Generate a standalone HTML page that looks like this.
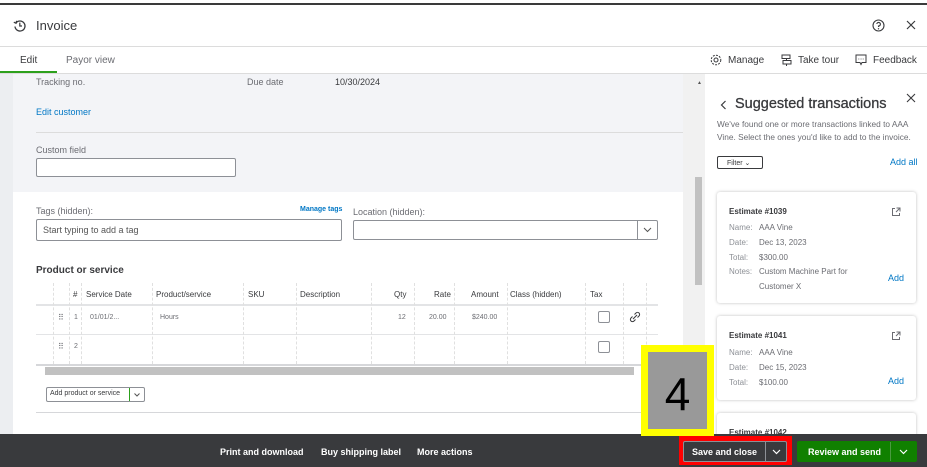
<!DOCTYPE html>
<html><head><meta charset="utf-8"><style>
*{box-sizing:border-box;margin:0;padding:0}
body{width:927px;height:467px;overflow:hidden;position:relative;background:#fff;font-family:"Liberation Sans",sans-serif;color:#393a3d}
.a{position:absolute}
.t{font-size:9px;color:#6b6c72;white-space:nowrap}
.vl{position:absolute;top:283px;height:81px;border-left:1px dashed #e0e0e0}
.lk{color:#0077c5}
svg{position:absolute;overflow:visible}
</style></head><body>
<div class="a" style="left:0;top:3px;width:927px;height:2px;background:#3a3a3a"></div>
<svg style="left:13px;top:19px" width="13" height="13" viewBox="0 0 13 13"><path d="M3 4 A5 5 0 1 1 2 7.5" fill="none" stroke="#393a3d" stroke-width="1.3"/><path d="M0.8 3.2 L3 4.3 L3.6 1.8" fill="none" stroke="#393a3d" stroke-width="1.2"/><path d="M6.8 3.6 V7 H9" fill="none" stroke="#393a3d" stroke-width="1.2"/></svg>
<div class="a" style="left:36px;top:18px;font-size:13px;color:#393a3d">Invoice</div>
<svg style="left:872px;top:19px" width="13" height="13" viewBox="0 0 13 13"><circle cx="6.5" cy="6.5" r="5.5" fill="none" stroke="#393a3d" stroke-width="1.1"/><path d="M4.8 5 A1.8 1.8 0 1 1 6.5 7 V8" fill="none" stroke="#393a3d" stroke-width="1.1"/><circle cx="6.5" cy="9.8" r=".7" fill="#393a3d"/></svg>
<svg style="left:906px;top:20px" width="10" height="10"><path d="M1 1 L9 9 M9 1 L1 9" stroke="#393a3d" stroke-width="1.2"/></svg>
<div class="a" style="left:0;top:46px;width:927px;height:1px;background:#dcdcdc"></div>
<div class="a" style="left:20px;top:55px;font-size:10px;color:#393a3d">Edit</div>
<div class="a" style="left:66px;top:55px;font-size:10px;color:#6b6c72">Payor view</div>
<div class="a" style="left:0;top:71px;width:57px;height:2px;background:#2ca01c"></div>
<svg style="left:710px;top:54px" width="12" height="12" viewBox="0 0 12 12"><circle cx="6" cy="6" r="2" fill="none" stroke="#393a3d"/><circle cx="6" cy="6" r="4.8" fill="none" stroke="#393a3d" stroke-dasharray="2 1.2"/></svg>
<div class="a" style="left:728px;top:55px;font-size:10px">Manage</div>
<svg style="left:781px;top:54px" width="11" height="12" viewBox="0 0 11 12"><rect x="1" y="1" width="8" height="3.5" fill="none" stroke="#393a3d"/><rect x="2" y="6.5" width="8" height="3.5" fill="none" stroke="#393a3d"/><path d="M5.5 4.5V6.5M5.5 10V12" stroke="#393a3d"/></svg>
<div class="a" style="left:798px;top:55px;font-size:10px">Take tour</div>
<svg style="left:855px;top:54px" width="12" height="12" viewBox="0 0 12 12"><path d="M1 1H11V8.5H7L6 10.5L5 8.5H1Z" fill="none" stroke="#393a3d"/><path d="M3.5 5H4.2M5.7 5H6.4M7.8 5H8.5" stroke="#393a3d"/></svg>
<div class="a" style="left:873px;top:55px;font-size:10px">Feedback</div>
<div class="a" style="left:0;top:73px;width:927px;height:1px;background:#dcdcdc"></div>
<div class="a" style="left:0;top:74px;width:13px;height:360px;background:#eceef1"></div>
<div class="a" style="left:13px;top:74px;width:670px;height:118px;background:#f3f4f7"></div>
<div class="a t" style="left:36px;top:77px">Tracking no.</div>
<div class="a t" style="left:247px;top:77px">Due date</div>
<div class="a t" style="left:335px;top:77px;color:#393a3d">10/30/2024</div>
<div class="a lk" style="left:36px;top:107px;font-size:9px">Edit customer</div>
<div class="a" style="left:36px;top:132px;width:647px;height:1px;background:#dcdcdc"></div>
<div class="a t" style="left:36px;top:145px">Custom field</div>
<div class="a" style="left:36px;top:158px;width:200px;height:19px;border:1px solid #8d9096;border-radius:2px;background:#fff"></div>
<div class="a t" style="left:36px;top:206px">Tags (hidden):</div>
<div class="a lk" style="left:300px;top:206px;font-size:7px;font-weight:bold">Manage tags</div>
<div class="a t" style="left:353px;top:207px">Location (hidden):</div>
<div class="a" style="left:36px;top:219px;width:306px;height:22px;border:1px solid #8d9096;border-radius:2px"></div>
<div class="a t" style="left:43px;top:225px;color:#555">Start typing to add a tag</div>
<div class="a" style="left:353px;top:220px;width:305px;height:20px;border:1px solid #8d9096;border-radius:2px"></div>
<div class="a" style="left:637px;top:220px;width:1px;height:20px;background:#8d9096"></div>
<svg style="left:643px;top:227px" width="9" height="6"><path d="M1 1L4.5 4.5L8 1" fill="none" stroke="#555"/></svg>
<div class="a" style="left:36px;top:265px;font-size:10px;font-weight:bold;color:#393a3d">Product or service</div>
<div class="a" style="left:36px;top:304px;width:622px;height:2px;background:#e3e4e6"></div>
<div class="a" style="left:36px;top:334px;width:622px;height:1px;background:#e3e4e6"></div>
<div class="a" style="left:36px;top:364px;width:622px;height:2px;background:#d6d7da"></div>
<div class="vl" style="left:53px"></div><div class="vl" style="left:69px"></div><div class="vl" style="left:81px"></div><div class="vl" style="left:152px"></div><div class="vl" style="left:243px"></div><div class="vl" style="left:296px"></div><div class="vl" style="left:371px"></div><div class="vl" style="left:414px"></div><div class="vl" style="left:454px"></div><div class="vl" style="left:507px"></div><div class="vl" style="left:585px"></div><div class="vl" style="left:623px"></div><div class="vl" style="left:646px"></div>
<div class="a t" style="left:73px;top:290px;color:#393a3d;font-size:8px">#</div>
<div class="a t" style="left:86px;top:290px;color:#393a3d;font-size:8px">Service Date</div>
<div class="a t" style="left:156px;top:290px;color:#393a3d;font-size:8px">Product/service</div>
<div class="a t" style="left:248px;top:290px;color:#393a3d;font-size:8px">SKU</div>
<div class="a t" style="left:300px;top:290px;color:#393a3d;font-size:8px">Description</div>
<div class="a t" style="left:394px;top:290px;color:#393a3d;font-size:8px">Qty</div>
<div class="a t" style="left:434px;top:290px;color:#393a3d;font-size:8px">Rate</div>
<div class="a t" style="left:471px;top:290px;color:#393a3d;font-size:8px">Amount</div>
<div class="a t" style="left:510px;top:290px;color:#393a3d;font-size:8px">Class (hidden)</div>
<div class="a t" style="left:590px;top:290px;color:#393a3d;font-size:8px">Tax</div>
<div class="a t" style="left:58px;top:313px;font-size:8px">⠿</div>
<div class="a t" style="left:74px;top:314px;font-size:7px">1</div>
<div class="a t" style="left:90px;top:314px;font-size:7px">01/01/2...</div>
<div class="a t" style="left:160px;top:314px;font-size:7px">Hours</div>
<div class="a t" style="left:398px;top:314px;font-size:7px">12</div>
<div class="a t" style="left:429px;top:314px;font-size:7px">20.00</div>
<div class="a t" style="left:472px;top:314px;font-size:7px">$240.00</div>
<div class="a" style="left:598px;top:311px;width:12px;height:12px;border:1px solid #8d9096;border-radius:2px"></div>
<svg style="left:629px;top:311px" width="12" height="12"><path d="M4 8L8 4M5.5 3.5L7 2A2 2 0 0 1 10 5L8.5 6.5M6.5 8.5L5 10A2 2 0 0 1 2 7L3.5 5.5" fill="none" stroke="#393a3d"/></svg>
<div class="a t" style="left:58px;top:342px;font-size:8px">⠿</div>
<div class="a t" style="left:74px;top:343px;font-size:7px">2</div>
<div class="a" style="left:598px;top:341px;width:12px;height:12px;border:1px solid #8d9096;border-radius:2px"></div>
<div class="a" style="left:45px;top:367px;width:589px;height:8px;background:#c1c1c1"></div>
<div class="a" style="left:46px;top:387px;width:99px;height:15px;border:1px solid #8d9096;border-radius:2px"></div>
<div class="a" style="left:50px;top:390px;font-size:7px;color:#393a3d">Add product or service</div>
<div class="a" style="left:129px;top:388px;width:1px;height:13px;background:#2ca01c"></div>
<svg style="left:134px;top:393px" width="6" height="4"><path d="M.5 .5L3 3L5.5 .5" fill="none" stroke="#555"/></svg>
<div class="a" style="left:36px;top:412px;width:647px;height:1px;background:#d6d7da"></div>
<div class="a" style="left:683px;top:74px;width:22px;height:360px;background:#f1f1f1"></div>
<div class="a" style="left:695px;top:177px;width:7px;height:108px;background:#c1c1c1"></div>
<div class="a" style="left:697px;top:80px;font-size:5px;color:#555">▲</div>
<div class="a" style="left:705px;top:74px;width:222px;height:360px;background:#fff"></div>
<svg style="left:720px;top:100px" width="7" height="10"><path d="M5.5 1L1.5 5L5.5 9" fill="none" stroke="#393a3d" stroke-width="1.2"/></svg>
<div class="a" style="left:735px;top:96px;font-size:14.5px;color:#393a3d;-webkit-text-stroke:.3px #393a3d">Suggested transactions</div>
<svg style="left:906px;top:93px" width="10" height="10"><path d="M1 1L9 9M9 1L1 9" stroke="#393a3d" stroke-width="1.1"/></svg>
<div class="a" style="left:717px;top:118px;font-size:8.3px;line-height:12.5px;color:#6b6c72;width:198px">We've found one or more transactions linked to AAA Vine. Select the ones you'd like to add to the invoice.</div>
<div class="a" style="left:717px;top:156px;width:46px;height:13px;border:1px solid #393a3d;border-radius:2px;font-size:7px;padding:2px 0 0 9px">Filter ⌄</div>
<div class="a lk" style="left:890px;top:157px;font-size:9px">Add all</div>
<div class="a" style="left:717px;top:192px;width:199px;height:111px;border-radius:3px;box-shadow:0 0 3px rgba(0,0,0,.25)"></div>
<div class="a" style="left:729px;top:207px;font-size:8px;font-weight:bold">Estimate #1039</div>
<div class="a t" style="left:729px;top:221px;font-size:8px;line-height:14.8px;color:#8d9096">Name:<br>Date:<br>Total:<br>Notes:</div>
<div class="a t" style="left:759px;top:221px;font-size:8px;line-height:14.8px;color:#6b6c72;white-space:normal;width:110px">AAA Vine<br>Dec 13, 2023<br>$300.00<br>Custom Machine Part for<br><span style="line-height:12px">Customer X</span></div>
<div class="a lk" style="left:888px;top:273px;font-size:9px">Add</div>
<svg style="left:891px;top:207px" width="10" height="10"><path d="M4 1.5H1.5V8.5H8.5V6M5.5 1H9V4.5M9 1L5 5" fill="none" stroke="#6b6c72"/></svg>
<div class="a" style="left:717px;top:316px;width:199px;height:84px;border-radius:3px;box-shadow:0 0 3px rgba(0,0,0,.25)"></div>
<div class="a" style="left:729px;top:331px;font-size:8px;font-weight:bold">Estimate #1041</div>
<div class="a t" style="left:729px;top:346px;font-size:8px;line-height:14.8px;color:#8d9096">Name:<br>Date:<br>Total:</div>
<div class="a t" style="left:759px;top:346px;font-size:8px;line-height:14.8px;color:#6b6c72">AAA Vine<br>Dec 15, 2023<br>$100.00</div>
<div class="a lk" style="left:888px;top:376px;font-size:9px">Add</div>
<svg style="left:891px;top:331px" width="10" height="10"><path d="M4 1.5H1.5V8.5H8.5V6M5.5 1H9V4.5M9 1L5 5" fill="none" stroke="#6b6c72"/></svg>
<div class="a" style="left:717px;top:413px;width:199px;height:30px;border-radius:3px;box-shadow:0 0 3px rgba(0,0,0,.25)"></div>
<div class="a" style="left:729px;top:428px;font-size:8px;font-weight:bold">Estimate #1042</div>
<div class="a" style="left:0;top:434px;width:927px;height:33px;background:#393a3d"></div>
<div class="a" style="left:220px;top:447px;font-size:9px;color:#fff;font-weight:bold">Print and download</div>
<div class="a" style="left:321px;top:447px;font-size:9px;color:#fff;font-weight:bold">Buy shipping label</div>
<div class="a" style="left:417px;top:447px;font-size:9px;color:#fff;font-weight:bold">More actions</div>
<div class="a" style="left:679px;top:436px;width:113px;height:29px;background:#f00"></div>
<div class="a" style="left:683px;top:441px;width:104px;height:21px;background:#393a3d;border:1px solid #8d9096;border-radius:2px"></div>
<div class="a" style="left:692px;top:447px;font-size:9px;color:#fff;font-weight:bold">Save and close</div>
<div class="a" style="left:765px;top:442px;width:1px;height:19px;background:#8d9096"></div>
<svg style="left:772px;top:449px" width="9" height="6"><path d="M1 1L4.5 4.5L8 1" fill="none" stroke="#fff" stroke-width="1.2"/></svg>
<div class="a" style="left:797px;top:441px;width:120px;height:21px;background:#108000;border-radius:2px"></div>
<div class="a" style="left:808px;top:447px;font-size:9px;color:#fff;font-weight:bold">Review and send</div>
<div class="a" style="left:890px;top:442px;width:1px;height:19px;background:#4a9a40"></div>
<svg style="left:899px;top:449px" width="9" height="6"><path d="M1 1L4.5 4.5L8 1" fill="none" stroke="#fff" stroke-width="1.2"/></svg>
<div class="a" style="left:641px;top:345px;width:73px;height:91px;background:#ff0"></div>
<div class="a" style="left:648px;top:352px;width:59px;height:77px;background:#999"></div>
<div class="a" style="left:648px;top:364px;width:59px;text-align:center;font-size:46px;color:#000;line-height:60px">4</div>
</body></html>
